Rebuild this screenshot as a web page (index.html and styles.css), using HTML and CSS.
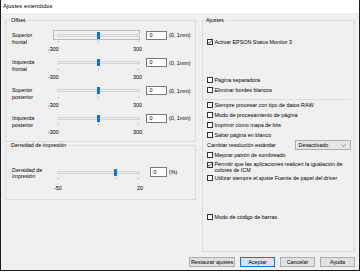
FILE: index.html
```html
<!DOCTYPE html>
<html lang="es">
<head>
<meta charset="utf-8">
<title>Ajustes extendidos</title>
<link rel="stylesheet" href="styles.css">
</head>
<body>
<div class="window">
  <div class="titlebar">Ajustes extendidos</div>
  <div class="content">
    <div class="columns">
      <div class="left">
        <fieldset class="group offset">
          <legend>Offset</legend>
          <div class="offset-body">
            <div class="srow">
              <div class="slabel">Superior<br>frontal</div>
              <div class="slider s-offset focus">
                <div class="zone">
                  <div class="track"></div>
                  <span class="tick t1"></span><span class="tick t2"></span><span class="tick t3"></span>
                  <span class="thumb" style="left:43.5px"></span>
                </div>
                <div class="scale"><span>-300</span><span>300</span></div>
              </div>
              <div class="edit">0</div>
              <div class="unit">(0, 1mm)</div>
            </div>
            <div class="srow">
              <div class="slabel">Izquierda<br>frontal</div>
              <div class="slider s-offset">
                <div class="zone">
                  <div class="track"></div>
                  <span class="tick t1"></span><span class="tick t2"></span><span class="tick t3"></span>
                  <span class="thumb" style="left:43.5px"></span>
                </div>
                <div class="scale"><span>-300</span><span>300</span></div>
              </div>
              <div class="edit">0</div>
              <div class="unit">(0, 1mm)</div>
            </div>
            <div class="srow">
              <div class="slabel">Superior<br>posterior</div>
              <div class="slider s-offset">
                <div class="zone">
                  <div class="track"></div>
                  <span class="tick t1"></span><span class="tick t2"></span><span class="tick t3"></span>
                  <span class="thumb" style="left:43.5px"></span>
                </div>
                <div class="scale"><span>-300</span><span>300</span></div>
              </div>
              <div class="edit">0</div>
              <div class="unit">(0, 1mm)</div>
            </div>
            <div class="srow">
              <div class="slabel">Izquierda<br>posterior</div>
              <div class="slider s-offset">
                <div class="zone">
                  <div class="track"></div>
                  <span class="tick t1"></span><span class="tick t2"></span><span class="tick t3"></span>
                  <span class="thumb" style="left:43.5px"></span>
                </div>
                <div class="scale"><span>-300</span><span>300</span></div>
              </div>
              <div class="edit">0</div>
              <div class="unit">(0, 1mm)</div>
            </div>
          </div>
        </fieldset>
        <fieldset class="group density">
          <legend>Densidad de impresión</legend>
          <div class="density-body">
            <div class="drow">
              <div class="dlabel">Densidad de<br>impresión</div>
              <div class="slider s-density">
                <div class="zone">
                  <div class="track"></div>
                  <span class="tick d1"></span><span class="tick d2"></span><span class="tick d3"></span>
                  <span class="thumb" style="left:56.5px"></span>
                </div>
                <div class="scale"><span>-50</span><span>20</span></div>
              </div>
              <div class="edit dedit">0</div>
              <div class="unit dunit">(%)</div>
            </div>
          </div>
        </fieldset>
      </div>
      <div class="right">
        <fieldset class="group settings">
          <legend>Ajustes</legend>
          <div class="settings-body">
            <div class="chk"><span class="box checked"><svg viewBox="0 0 6 6" width="6" height="6"><path d="M1.1 3.1 L2.4 4.4 L4.9 1.4" fill="none" stroke="#222" stroke-width="0.8"/></svg></span><span>Activar EPSON Status Monitor 3</span></div>
            <div class="chk gap-big"><span class="box"></span><span>Página separadora</span></div>
            <div class="chk"><span class="box"></span><span>Eliminar bordes blancos</span></div>
            <div class="sep"></div>
            <div class="chk"><span class="box"></span><span>Siempre procesar con tipo de datos RAW</span></div>
            <div class="chk"><span class="box"></span><span>Modo de procesamiento de página</span></div>
            <div class="chk"><span class="box"></span><span>Imprimir como mapa de bits</span></div>
            <div class="chk"><span class="box"></span><span>Saltar página en blanco</span></div>
            <div class="combo-row">
              <span>Cambiar resolución estándar</span>
              <div class="combo"><span>Desactivado</span><svg viewBox="0 0 5 3" width="5" height="3"><path d="M0.5 0.5 L2.5 2.5 L4.5 0.5" fill="none" stroke="#444" stroke-width="0.6"/></svg></div>
            </div>
            <div class="chk"><span class="box"></span><span>Mejorar patrón de sombreado</span></div>
            <div class="chk two"><span class="box checked"><svg viewBox="0 0 6 6" width="6" height="6"><path d="M1.1 3.1 L2.4 4.4 L4.9 1.4" fill="none" stroke="#222" stroke-width="0.8"/></svg></span><span class="txt2">Permitir que las aplicaciones realicen la igualación de<br>colores de ICM</span></div>
            <div class="chk"><span class="box"></span><span>Utilizar siempre el ajuste Fuente de papel del driver</span></div>
            <div class="chk gap-barcode"><span class="box"></span><span>Modo de código de barras</span></div>
          </div>
        </fieldset>
      </div>
    </div>
    <div class="buttons">
      <div class="btn wide">Restaurar ajustes</div>
      <div class="btn default">Aceptar</div>
      <div class="btn">Cancelar</div>
      <div class="btn">Ayuda</div>
    </div>
  </div>
</div>
</body>
</html>
```

FILE: styles.css
```css
* { box-sizing: border-box; }
html, body { margin: 0; padding: 0; }
body {
  width: 360px;
  height: 272px;
  overflow: hidden;
  background: #fff;
  font-family: "Liberation Sans", Arial, sans-serif;
  font-size: 5.4px;
  color: #000;
}
.window {
  width: 360px;
  height: 271px;
  border: 1px solid #1c1c1c;
  border-top: 0;
  background: #f0f0f0;
  display: flex;
  flex-direction: column;
}
.titlebar {
  height: 13px;
  background: #fff;
  font-size: 5.9px;
  line-height: 13px;
  padding-left: 2px;
  flex: none;
}
.content {
  flex: 1;
  display: flex;
  flex-direction: column;
  padding: 4px 4px 0 4px;
}
.columns {
  display: flex;
  gap: 6px;
  height: 235px;
  flex: none;
}
.left {
  width: 191px;
  display: flex;
  flex-direction: column;
}
.right {
  width: 153px;
  display: flex;
}
fieldset.group {
  margin: 0;
  padding: 0;
  border: 1px solid #dcdcdc;
  min-width: 0;
}
legend {
  padding: 0 1px;
  margin-left: 4px;
  line-height: 6px;
  font-size: 5.4px;
}
.settings { flex: 1; }
.settings legend { margin-left: 2px; }

/* offset group */
.offset-body { padding: 7px 0 0 6px; }
.srow {
  height: 27.8px;
  display: flex;
  align-items: flex-start;
}
.slabel {
  width: 41px;
  line-height: 7px;
  padding-top: 1.5px;
  flex: none;
}
.slider { flex: none; }
.s-offset { width: 87px; }
.zone {
  position: relative;
  height: 10px;
}
.focus .zone { border: 1px solid #bdbdbd; }
.track {
  position: absolute;
  top: 3.5px;
  height: 3px;
  background: #e7eaea;
  border: 1px solid #d6d6d6;
}
.s-offset .track { left: 4px; right: 0; }
.focus .track { left: 3px; right: -1px; top: 2.5px; }
.thumb {
  position: absolute;
  top: 1.5px;
  width: 3px;
  height: 7px;
  background: #0078d7;
}
.focus .thumb { top: 0.5px; margin-left: -1px; }
.tick {
  position: absolute;
  top: 11px;
  width: 1px;
  height: 1px;
  background: #a8a8a8;
}
.t1 { left: 5px; }
.t2 { left: 45px; }
.t3 { left: 85px; }
.focus .tick { top: 10px; margin-left: -1px; }
.scale {
  display: flex;
  justify-content: space-between;
  line-height: 6px;
}
.s-offset .scale { margin: 6px -2px 0 -5px; }
.edit {
  flex: none;
  width: 21px;
  height: 9px;
  margin-top: 0.5px;
  margin-left: 6px;
  background: #fff;
  border: 1px solid #7a7a7a;
  line-height: 7px;
  padding-left: 2.5px;
}
.unit {
  flex: none;
  margin-left: 2px;
  line-height: 10px;
  white-space: nowrap;
}

/* density group */
.density { margin-top: 3px; }
.density-body { padding: 19px 0 8px 6px; }
.drow {
  height: 24px;
  display: flex;
  align-items: flex-start;
}
.dlabel {
  width: 45px;
  line-height: 6.6px;
  margin-top: -0.6px;
  flex: none;
}
.s-density { width: 83px; }
.s-density .track { left: 0; right: 0; }
.d1 { left: 1px; }
.d2 { left: 58px; }
.d3 { left: 81px; }
.s-density .scale { margin: 8px -3px 0 -3px; }
.dedit { width: 17px; height: 10px; margin-top: 0; margin-left: 10px; line-height: 8px; }
.dunit { margin-left: 2px; }

/* settings group */
.settings-body {
  padding: 13.5px 3px 0 4px;
  display: flex;
  flex-direction: column;
}
.chk {
  height: 10px;
  display: flex;
  align-items: center;
  gap: 1.5px;
  white-space: nowrap;
}
.box {
  flex: none;
  width: 6px;
  height: 6px;
  border: 1px solid #333;
  background: #fff;
  position: relative;
}
.box svg {
  position: absolute;
  left: -1px;
  top: -1px;
}
.gap-big { margin-top: 28.5px; }
.sep {
  height: 1px;
  background: #dcdcdc;
  margin: 4px 0 0 -4px;
}
.combo-row {
  height: 10px;
  display: flex;
  align-items: center;
  justify-content: space-between;
}
.combo {
  width: 56px;
  height: 10px;
  border: 1px solid #adadad;
  background: #e5e5e5;
  display: flex;
  align-items: center;
  justify-content: space-between;
  padding: 0 4px 0 2.5px;
}
.two {
  height: 13px;
  align-items: flex-start;
}
.two .box { margin-top: 1.5px; }
.txt2 {
  line-height: 6.5px;
  padding-top: 0.5px;
}
.gap-barcode { margin-top: 29px; }

/* buttons */
.buttons {
  margin-top: 5px;
  display: flex;
  justify-content: flex-end;
  gap: 5px;
  padding-right: 0;
}
.btn {
  width: 35px;
  height: 10px;
  border: 1px solid #adadad;
  background: #e1e1e1;
  text-align: center;
  line-height: 8px;
}
.btn.wide { width: 46px; }
.btn.default { border-color: #0078d7; }
```
